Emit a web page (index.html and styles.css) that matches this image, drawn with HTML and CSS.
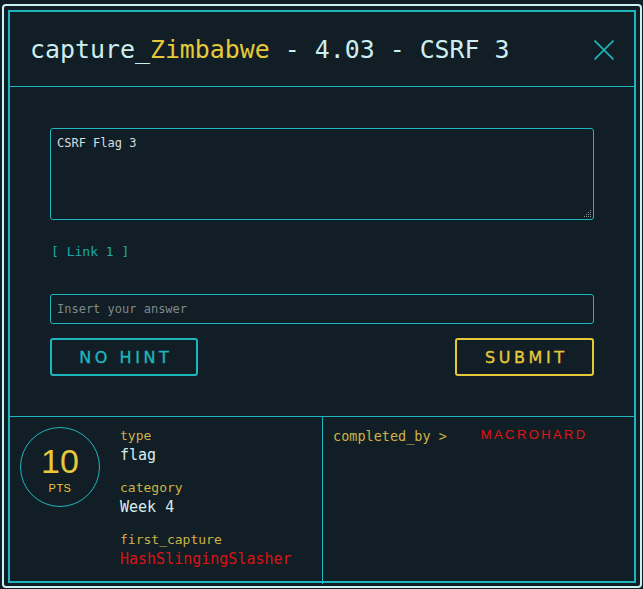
FILE: index.html
```html
<!DOCTYPE html>
<html>
<head>
<meta charset="utf-8">
<link rel="stylesheet" href="styles.css">
</head>
<body>
<div class="frame">
  <div class="modal">
    <div class="header">
      <h1 class="title">capture_<span class="hl">Zimbabwe</span> - 4.03 - CSRF 3</h1>
      <svg class="close" width="20" height="20" viewBox="0 0 20 20"><path d="M0.5 0.5 L19.5 19.5 M19.5 0.5 L0.5 19.5" stroke="#1fb5be" stroke-width="1.6" fill="none"/></svg>
    </div>
    <div class="body">
      <div class="ta-wrap">
        <textarea class="desc" readonly>CSRF Flag 3</textarea>
        <svg class="grip" width="8" height="8" viewBox="0 0 8 8">
          <g fill="#8a9599">
            <rect x="6" y="0" width="1" height="1"/>
            <rect x="4" y="2" width="1" height="1"/><rect x="6" y="2" width="1" height="1"/>
            <rect x="2" y="4" width="1" height="1"/><rect x="4" y="4" width="1" height="1"/><rect x="6" y="4" width="1" height="1"/>
            <rect x="0" y="6" width="1" height="1"/><rect x="2" y="6" width="1" height="1"/><rect x="4" y="6" width="1" height="1"/><rect x="6" y="6" width="1" height="1"/>
          </g>
        </svg>
      </div>
      <div class="links"><a class="link">[ Link 1 ]</a></div>
      <input class="answer" type="text" placeholder="Insert your answer">
      <div class="actions">
        <button class="btn hint">NO HINT</button>
        <button class="btn submit">SUBMIT</button>
      </div>
    </div>
    <div class="footer">
      <div class="info-col">
        <div class="points">
          <div class="pts-num">10</div>
          <div class="pts-lbl">PTS</div>
        </div>
        <div class="meta">
          <div class="group"><div class="label">type</div><div class="value">flag</div></div>
          <div class="group"><div class="label">category</div><div class="value">Week 4</div></div>
          <div class="group"><div class="label">first_capture</div><div class="value red">HashSlingingSlasher</div></div>
        </div>
      </div>
      <div class="done-col">
        <span class="label done-lbl">completed_by &gt;</span>
        <span class="team">MACROHARD</span>
      </div>
    </div>
  </div>
</div>
</body>
</html>
```
FILE: styles.css
```css
html, body {
  margin: 0;
  padding: 0;
  background: #121e25;
}
body {
  width: 643px;
  height: 589px;
  overflow: hidden;
  font-family: "DejaVu Sans Mono", "Liberation Mono", monospace;
  color: #cdeef0;
}
.frame {
  box-sizing: border-box;
  margin: 4px 1px 1px 2px;
  width: 640px;
  height: 584px;
  border: 2px solid #c9f1f1;
  border-radius: 4px;
  padding: 4px 4px 3px 4px;
}
.modal {
  box-sizing: border-box;
  height: 100%;
  border: 2px solid #1fb5be;
  display: flex;
  flex-direction: column;
}
.header {
  height: 74px;
  flex: none;
  border-bottom: 1px solid #1fb5be;
  display: flex;
  align-items: center;
  justify-content: space-between;
  padding: 0 20px 0 20px;
}
.title {
  margin: 0;
  font-weight: normal;
  font-size: 24.9px;
  color: #cdeef0;
  padding-top: 1px;
}
.hl { color: #e6c93b; }
.close { display: block; margin-top: 2px; }
.body {
  flex: none;
  box-sizing: border-box;
  border-bottom: 1px solid #1fb5be;
  padding: 41px 40px 40px 40px;
}
.ta-wrap { position: relative; }
.desc {
  display: block;
  box-sizing: border-box;
  width: 544px;
  height: 92px;
  margin: 0;
  background: transparent;
  border: 1px solid #1fb5be;
  border-radius: 3px;
  padding: 7px 6px;
  font-family: "DejaVu Sans Mono", monospace;
  font-size: 12px;
  line-height: 15px;
  color: #d6dee0;
  resize: none;
  outline: none;
}
.grip {
  position: absolute;
  right: 2px;
  bottom: 2px;
}
.links {
  margin-top: 24px;
  height: 16px;
  line-height: 16px;
  font-size: 13px;
}
.link { color: #1fa8b1; padding-left: 1px; }
.answer {
  display: block;
  box-sizing: border-box;
  margin-top: 34px;
  width: 544px;
  height: 30px;
  background: transparent;
  border: 1px solid #1fb5be;
  border-radius: 3px;
  padding: 0 6px;
  font-family: "DejaVu Sans Mono", monospace;
  font-size: 12px;
  color: #d6dee0;
  outline: none;
}
.answer::placeholder { color: #7e898e; }
.actions {
  margin-top: 14px;
  display: flex;
  justify-content: space-between;
}
.btn {
  box-sizing: border-box;
  height: 38px;
  background: transparent;
  border: 2px solid;
  border-radius: 3px;
  font-family: "DejaVu Sans", "Liberation Sans", sans-serif;
  font-weight: normal;
  font-size: 16px;
  letter-spacing: 3.6px;
  text-indent: 3.6px;
  -webkit-text-stroke: 0.35px currentColor;
  padding: 0;
}
.hint { width: 148px; border-color: #1fb5be; color: #1fb5be; }
.submit { width: 139px; border-color: #e6c93b; color: #e6c93b; }
.footer {
  flex: 1;
  display: grid;
  grid-template-columns: 313px 1fr;
}
.info-col {
  border-right: 1px solid #1fb5be;
  display: flex;
  padding: 10px 10px 0 10px;
  gap: 20px;
}
.points {
  box-sizing: border-box;
  width: 80px;
  height: 80px;
  border: 1px solid #1fb5be;
  border-radius: 50%;
  display: flex;
  flex-direction: column;
  align-items: center;
  justify-content: center;
  color: #e6c93b;
  font-family: "Liberation Sans", Arial, sans-serif;
}
.pts-num {
  font-size: 34px;
  line-height: 34px;
  margin-top: 4px;
}
.pts-lbl {
  font-size: 11px;
  line-height: 12px;
  letter-spacing: 0.5px;
  margin-top: 4px;
}
.meta { padding-top: 1px; }
.group { margin-bottom: 14px; }
.label {
  font-size: 13px;
  line-height: 16px;
  color: #cdb445;
}
.value {
  font-size: 15px;
  line-height: 22px;
  color: #d6eef0;
}
.value.red { color: #d81414; }
.done-col {
  padding: 11px 10px 0 10px;
  display: flex;
  align-items: flex-start;
  gap: 34px;
}
.done-lbl { font-size: 13.5px; }
.team {
  font-family: "Liberation Sans", Arial, sans-serif;
  font-size: 13px;
  line-height: 13px;
  letter-spacing: 2.4px;
  color: #e01414;
  margin-top: 0px;
}
```
